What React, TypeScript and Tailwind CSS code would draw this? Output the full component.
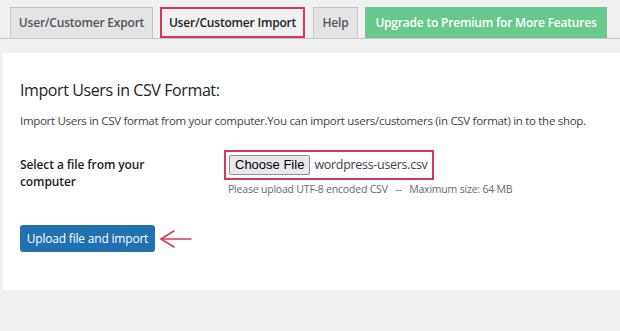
export default function App() {
  return (
    <div className="h-[331px] w-[620px] overflow-hidden whitespace-nowrap bg-[#f1f1f1] font-['Open_Sans',sans-serif] text-[#3c434a]">
      {/* tabs */}
      <div className="flex items-end gap-[7px] border-b border-[#c3c4c7] pl-[10px] pt-[7px]">
        <div className="flex h-[31px] w-[143px] items-center justify-center border border-b-0 border-[#c3c4c7] bg-[#e4e4e4] text-[12px] font-semibold tracking-[-0.2px] text-[#50575e]">
          User/Customer Export
        </div>
        <div className="flex h-[31px] w-[145px] items-center justify-center border-2 border-[#d6375a] bg-[#f1f1f1] text-[12px] font-semibold tracking-[-0.2px] text-[#1d2327]">
          User/Customer Import
        </div>
        <div className="ml-[1px] flex h-[31px] w-[45px] items-center justify-center border border-b-0 border-[#c3c4c7] bg-[#e4e4e4] text-[12px] font-semibold tracking-[-0.2px] text-[#50575e]">
          Help
        </div>
        <div className="flex h-[31px] w-[242px] items-center justify-center bg-[#68c98d] text-[12px] font-semibold tracking-[-0.2px] text-white">
          Upgrade to Premium for More Features
        </div>
      </div>

      {/* panel */}
      <div className="ml-[3px] mt-[14px] h-[237px] bg-white px-[17px] pt-[26px]">
        <h2 className="text-[16px] leading-[22px] tracking-[-0.4px] text-[#1d2327]">Import Users in CSV Format:</h2>
        <p className="mt-[11px] text-[11.5px] leading-[18px] tracking-[-0.3px] text-[#3c434a]">
          Import Users in CSV format from your computer.You can import users/customers (in CSV format) in to the shop.
        </p>

        <div className="mt-[20px] flex">
          <div className="w-[204px] pt-[6px] text-[12px] font-semibold leading-[17px] tracking-[-0.1px] text-[#1d2327]">
            Select a file from your
            <br />
            computer
          </div>
          <div className="flex flex-col">
            <div className="flex h-[30px] items-center self-start border-2 border-[#d6375a] pl-[3px] pr-[4px]">
              <span className="flex h-[20px] items-center rounded-[2px] border border-[#8f8f9d] bg-[#e9e9ed] px-[5px] font-['Liberation_Sans',sans-serif] text-[13px] text-black">
                Choose File
              </span>
              <span className="ml-[4px] text-[12.5px] tracking-[-0.3px] text-[#3c434a]">wordpress-users.csv</span>
            </div>
            <div className="mt-[2px] whitespace-pre pl-[4px] text-[10.5px] leading-[14px] tracking-[-0.2px] text-[#646970]">
              Please upload UTF-8 encoded CSV   --   Maximum size: 64 MB
            </div>
          </div>
        </div>

        <div className="mt-[29px] flex items-center">
          <button className="flex h-[27px] w-[135px] items-center justify-center rounded-[3px] bg-[#2271b1] text-[12px] tracking-[-0.2px] text-white">
            Upload file and import
          </button>
          <svg width="34" height="20" viewBox="0 0 34 20" className="ml-[4px]" fill="none" stroke="#d6375a" strokeWidth="1.5" strokeLinecap="round" strokeLinejoin="round">
            <path d="M2 10h30" />
            <path d="M15 2L2 10l13 8" />
          </svg>
        </div>
      </div>
    </div>
  )
}
